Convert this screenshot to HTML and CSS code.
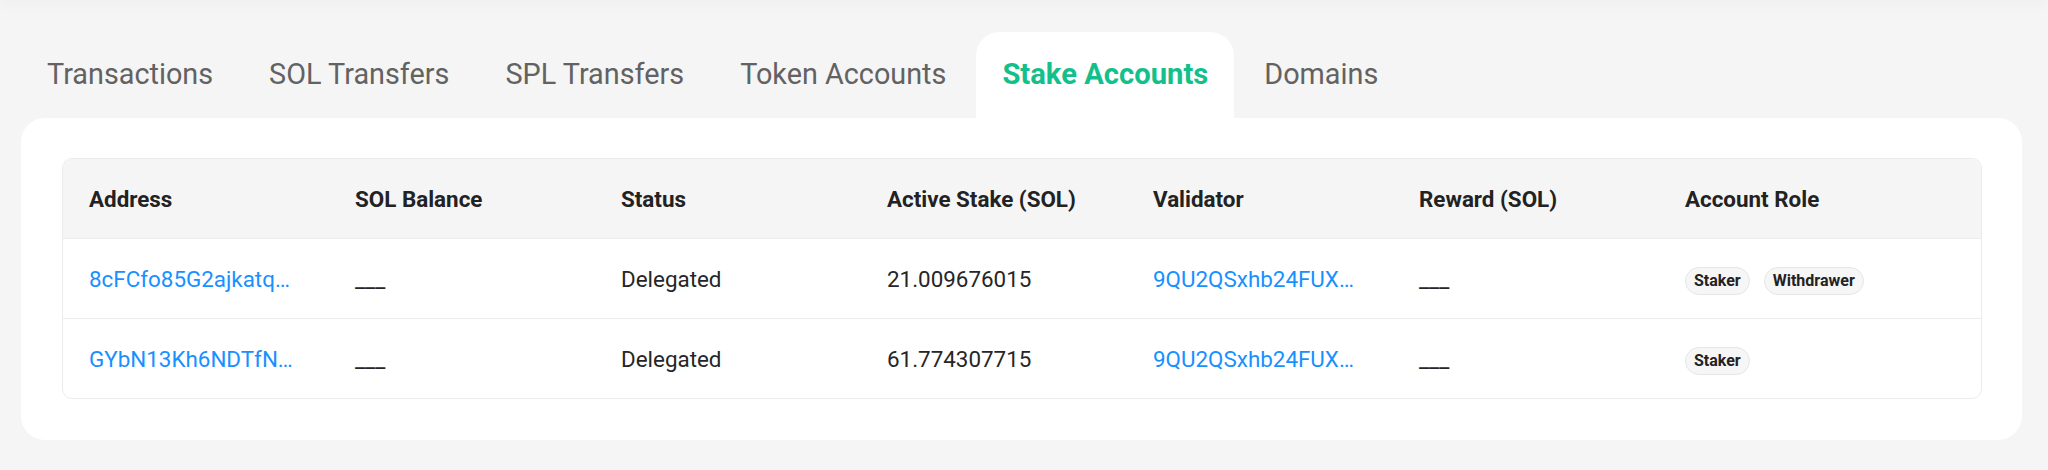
FILE: index.html
```html
<!DOCTYPE html>
<html lang="en">
<head>
<meta charset="utf-8">
<title>Stake Accounts</title>
<link rel="stylesheet" href="styles.css">
</head>
<body>
<div class="topshade"></div>
<nav class="tabs">
  <div class="tab">Transactions</div>
  <div class="tab">SOL Transfers</div>
  <div class="tab">SPL Transfers</div>
  <div class="tab">Token Accounts</div>
  <div class="tab active">Stake Accounts</div>
  <div class="tab">Domains</div>
</nav>
<section class="panel">
  <div class="table">
    <div class="row head">
      <div class="cell">Address</div>
      <div class="cell">SOL Balance</div>
      <div class="cell">Status</div>
      <div class="cell">Active Stake (SOL)</div>
      <div class="cell">Validator</div>
      <div class="cell">Reward (SOL)</div>
      <div class="cell">Account Role</div>
    </div>
    <div class="row">
      <div class="cell"><a class="link" href="#">8cFCfo85G2ajkatq…</a></div>
      <div class="cell">___</div>
      <div class="cell">Delegated</div>
      <div class="cell">21.009676015</div>
      <div class="cell"><a class="link" href="#">9QU2QSxhb24FUX…</a></div>
      <div class="cell">___</div>
      <div class="cell"><span class="badge">Staker</span><span class="badge">Withdrawer</span></div>
    </div>
    <div class="row last">
      <div class="cell"><a class="link" href="#">GYbN13Kh6NDTfN…</a></div>
      <div class="cell">___</div>
      <div class="cell">Delegated</div>
      <div class="cell">61.774307715</div>
      <div class="cell"><a class="link" href="#">9QU2QSxhb24FUX…</a></div>
      <div class="cell">___</div>
      <div class="cell"><span class="badge">Staker</span></div>
    </div>
  </div>
</section>
</body>
</html>
```
FILE: styles.css
```css
html, body {
  margin: 0;
  padding: 0;
}
body {
  background: #f5f5f5;
  font-family: Roboto, "Liberation Sans", Arial, sans-serif;
  width: 2048px;
  height: 470px;
  overflow: hidden;
}
.topshade {
  height: 0;
  box-shadow: 0 0 14px 2px rgba(0, 0, 0, 0.07);
}
.tabs {
  display: flex;
  gap: 4px;
  padding: 32px 0 0 21px;
}
.tab {
  height: 86px;
  padding: 0 26px 3px;
  display: flex;
  align-items: center;
  box-sizing: border-box;
  font-size: 28.8px;
  color: #626262;
  white-space: nowrap;
}
.tab.active {
  background: #ffffff;
  border-radius: 24px 24px 0 0;
  color: #13c08b;
  font-weight: 700;
  font-size: 29.2px;
}
.panel {
  margin-left: 21px;
  width: 2001px;
  box-sizing: border-box;
  padding: 40px 40px 41px 41px;
  background: #ffffff;
  border-radius: 24px;
}
.table {
  border: 1px solid #ebebeb;
  border-radius: 10px;
  overflow: hidden;
}
.row {
  display: grid;
  grid-template-columns: repeat(6, 266px) 1fr;
  height: 79px;
  border-bottom: 1px solid #ececec;
  box-sizing: content-box;
}
.row.head {
  background: #f5f5f5;
}
.row.last {
  border-bottom: 0;
}
.cell {
  display: flex;
  align-items: center;
  padding: 0 26px;
  font-size: 22.4px;
  color: #262626;
  white-space: nowrap;
  overflow: hidden;
}
.head .cell {
  font-weight: 700;
  color: #222222;
}
.link {
  color: #1890ff;
  text-decoration: none;
}
.badge {
  display: inline-flex;
  align-items: center;
  height: 28px;
  box-sizing: border-box;
  padding: 0 8px;
  margin-top: 4px;
  margin-right: 14px;
  border: 1px solid #e6e6e6;
  background: #f6f6f6;
  border-radius: 14px;
  font-size: 16px;
  font-weight: 700;
  color: #222222;
}
```
